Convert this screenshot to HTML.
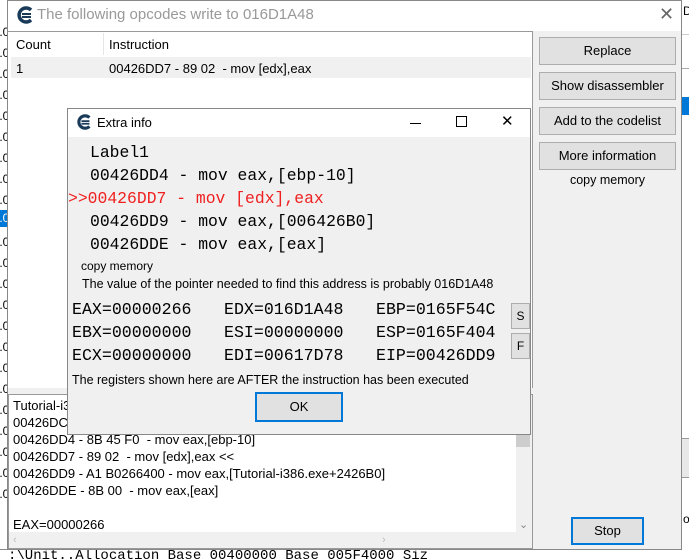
<!DOCTYPE html>
<html><head><meta charset="utf-8"><style>
*{margin:0;padding:0;box-sizing:border-box}
body{width:689px;height:559px;overflow:hidden;background:#fff;position:relative;font-family:"Liberation Sans",sans-serif;font-size:12.5px;color:#000}
.a{position:absolute;white-space:nowrap}
.mono{font-family:"Liberation Mono",monospace;font-size:16.4px}
.btn{position:absolute;background:#e1e1e1;border:1px solid #adadad;text-align:center;font-size:13px}
.blue{border:2px solid #0078d7}
</style></head><body>
<!-- left background strip -->
<div class="a" style="left:-14px;top:22px;line-height:21px;font-size:12px;white-space:pre">45.0
45.0
45.0
45.0
45.0
45.0
45.0
45.0
45.0
45.0
45.0
45.0
45.0
45.0
45.0
45.0
45.0
45.0
45.0
45.0
45.0
45.0
45.0</div>
<div class="a" style="left:0;top:210px;height:17px;width:7px;background:#0078d7;overflow:hidden"><div style="position:absolute;left:-14px;top:0;color:#fff;font-size:12px;line-height:17px">45.0</div></div>
<!-- right background -->
<div class="a" style="left:681px;top:0;width:8px;height:559px;background:#fff"></div>
<div class="a" style="left:683px;top:4px;font-size:12px">D</div>
<div class="a" style="left:681px;top:34px;width:8px;height:1px;background:#ccc"></div>
<div class="a" style="left:681px;top:68px;width:8px;height:1px;background:#aaa"></div>
<div class="a" style="left:681px;top:97px;width:8px;height:18px;background:#0078d7"></div>
<div class="a" style="left:681px;top:438px;width:8px;height:40px;background:#e8e8e8;border-top:1px solid #999;border-bottom:1px solid #999"></div>
<div class="a" style="left:683px;top:512px;font-size:12px">or</div>
<!-- bottom background text -->
<div class="a" style="left:8px;top:550px;width:420px;overflow:hidden;height:9px">
<div class="mono" style="position:absolute;left:0;top:-1px;font-size:14px;line-height:14px">:\Unit..Allocation Base 00400000 Base 005F4000 Size 5000 Module Tut</div></div>
<div class="a" style="left:0;top:549px;width:681px;height:1px;background:#888"></div>

<!-- main dialog -->
<div class="a" style="left:7px;top:0;width:675px;height:550px;background:#f0f0f0;border:1px solid #888"></div>
<div class="a" style="left:8px;top:1px;width:673px;height:30px;background:#fff"></div>
<svg class="a" style="left:17px;top:6px" width="18" height="18" viewBox="0 0 18 18"><path d="M14 4 A7 7 0 1 0 14 14" fill="none" stroke="#1a3a5a" stroke-width="3.5"/><path d="M5 8h9M5 11h9" stroke="#1a3a5a" stroke-width="2"/></svg>
<div class="a" style="left:37px;top:6px;font-size:15px;color:#999">The following opcodes write to 016D1A48</div>
<div class="a" style="left:659px;top:4px;font-size:18px;color:#666;font-weight:300">✕</div>

<!-- list -->
<div class="a" style="left:8px;top:31px;width:525px;height:357px;background:#fff;border-top:1px solid #999;border-right:1px solid #999"></div>
<div class="a" style="left:103px;top:33px;width:1px;height:22px;background:#e5e5e5"></div>
<div class="a" style="left:16px;top:37px;font-size:13px">Count</div>
<div class="a" style="left:109px;top:37px;font-size:13px">Instruction</div>
<div class="a" style="left:11px;top:57px;width:520px;height:21px;background:#f0f0f0"></div>
<div class="a" style="left:16px;top:61px;font-size:13px">1</div>
<div class="a" style="left:109px;top:61px;font-size:13px">00426DD7 - 89 02&nbsp; - mov [edx],eax</div>

<!-- memo -->
<div class="a" style="left:8px;top:394px;width:525px;height:155px;background:#f0f0f0;border:1px solid #999"></div>
<div class="a" style="left:9px;top:395px;width:507px;height:137px;background:#fff"></div>
<div class="a" style="left:516px;top:435px;width:14px;height:12px;background:#cdcdcd"></div>
<div class="a" style="left:519px;top:518px;font-size:11px;color:#888">⌄</div>
<div class="a" style="left:13px;top:534px;font-size:11px;color:#bbb">‹</div>
<div class="a" style="left:382px;top:534px;font-size:11px;color:#bbb">›</div>
<div class="a" style="left:13px;top:397px;font-size:13px;line-height:17px;white-space:pre">Tutorial-i386.exe+26DCB:
00426DCB - 8B 55 F8  - mov edx,[ebp-08]
00426DD4 - 8B 45 F0  - mov eax,[ebp-10]
00426DD7 - 89 02  - mov [edx],eax &lt;&lt;
00426DD9 - A1 B0266400 - mov eax,[Tutorial-i386.exe+2426B0]
00426DDE - 8B 00  - mov eax,[eax]

EAX=00000266</div>

<!-- right buttons -->
<div class="btn" style="left:539px;top:37px;width:137px;height:28px;line-height:26px">Replace</div>
<div class="btn" style="left:539px;top:72px;width:137px;height:28px;line-height:26px">Show disassembler</div>
<div class="btn" style="left:539px;top:107px;width:137px;height:28px;line-height:26px">Add to the codelist</div>
<div class="btn" style="left:539px;top:142px;width:137px;height:28px;line-height:26px">More information</div>
<div class="a" style="left:539px;top:173px;width:137px;text-align:center;font-size:12.5px">copy memory</div>
<div class="btn blue" style="left:571px;top:517px;width:73px;height:28px;line-height:24px">Stop</div>

<!-- extra info dialog -->
<div class="a" style="left:67px;top:108px;width:464px;height:327px;background:#f0f0f0;border:1px solid #888"></div>
<div class="a" style="left:68px;top:109px;width:462px;height:28px;background:#fff"></div>
<svg class="a" style="left:77px;top:114px" width="16" height="16" viewBox="0 0 18 18"><path d="M14 4 A7 7 0 1 0 14 14" fill="none" stroke="#1a3a5a" stroke-width="3.5"/><path d="M5 8h9M5 11h9" stroke="#1a3a5a" stroke-width="2"/></svg>
<div class="a" style="left:97px;top:115px;font-size:13px">Extra info</div>
<div class="a" style="left:410px;top:123px;width:11px;height:1px;background:#000"></div>
<div class="a" style="left:456px;top:116px;width:11px;height:11px;border:1px solid #000"></div>
<div class="a" style="left:501px;top:112px;font-size:15px">✕</div>

<div class="a mono" style="left:90px;top:143px">Label1</div>
<div class="a mono" style="left:90px;top:166px">00426DD4 - mov eax,[ebp-10]</div>
<div class="a mono" style="left:68px;top:189px;color:#f02020">&gt;&gt;00426DD7 - mov [edx],eax</div>
<div class="a mono" style="left:90px;top:212px">00426DD9 - mov eax,[006426B0]</div>
<div class="a mono" style="left:90px;top:235px">00426DDE - mov eax,[eax]</div>
<div class="a" style="left:81px;top:259px;font-size:12px">copy memory</div>
<div class="a" style="left:82px;top:277px;font-size:12.5px">The value of the pointer needed to find this address is probably 016D1A48</div>

<div class="a mono" style="left:72px;top:298px;font-size:16.6px;line-height:23px;white-space:pre">EAX=00000266
EBX=00000000
ECX=00000000</div>
<div class="a mono" style="left:224px;top:298px;font-size:16.6px;line-height:23px;white-space:pre">EDX=016D1A48
ESI=00000000
EDI=00617D78</div>
<div class="a mono" style="left:376px;top:298px;font-size:16.6px;line-height:23px;white-space:pre">EBP=0165F54C
ESP=0165F404
EIP=00426DD9</div>
<div class="btn" style="left:511px;top:303px;width:19px;height:26px;line-height:24px;font-size:12px">S</div>
<div class="btn" style="left:511px;top:333px;width:19px;height:26px;line-height:24px;font-size:12px">F</div>
<div class="a" style="left:72px;top:373px;font-size:12.5px">The registers shown here are AFTER the instruction has been executed</div>
<div class="btn blue" style="left:255px;top:392px;width:88px;height:30px;line-height:26px">OK</div>
</body></html>
